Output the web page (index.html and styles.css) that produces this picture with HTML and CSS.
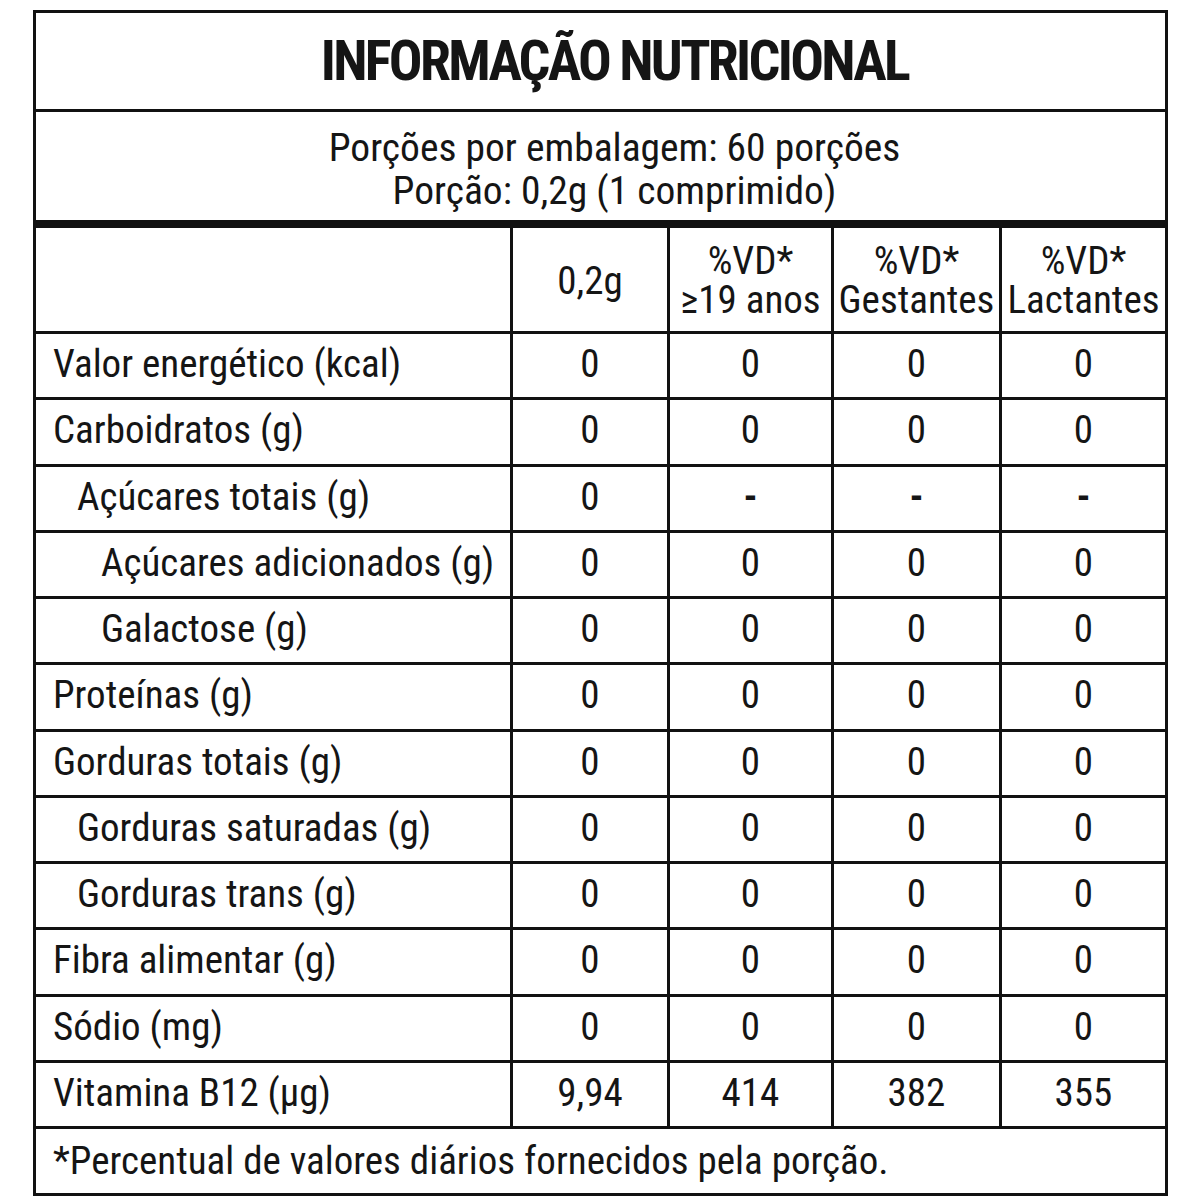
FILE: index.html
```html
<!DOCTYPE html>
<html lang="pt-BR">
<head>
<meta charset="utf-8">
<title>Informação Nutricional</title>
<link rel="stylesheet" href="styles.css">
</head>
<body>
<table class="nutri">
  <colgroup>
    <col class="c-label">
    <col class="c-q">
    <col class="c-vd1">
    <col class="c-vd2">
    <col class="c-vd3">
  </colgroup>
  <tr class="r-title"><td colspan="5" class="title">INFORMAÇÃO NUTRICIONAL</td></tr>
  <tr class="r-serving"><td colspan="5" class="serving">Porções por embalagem: 60 porções<br>Porção: 0,2g (1 comprimido)</td></tr>
  <tr class="r-head">
    <td></td>
    <td class="num">0,2g</td>
    <td class="num">%VD*<br>≥19 anos</td>
    <td class="num">%VD*<br>Gestantes</td>
    <td class="num">%VD*<br>Lactantes</td>
  </tr>
  <tr class="row"><td class="lbl">Valor energético (kcal)</td><td class="num">0</td><td class="num">0</td><td class="num">0</td><td class="num">0</td></tr>
  <tr class="row"><td class="lbl">Carboidratos (g)</td><td class="num">0</td><td class="num">0</td><td class="num">0</td><td class="num">0</td></tr>
  <tr class="row"><td class="lbl ind1">Açúcares totais (g)</td><td class="num">0</td><td class="num dash">-</td><td class="num dash">-</td><td class="num dash">-</td></tr>
  <tr class="row"><td class="lbl ind2">Açúcares adicionados (g)</td><td class="num">0</td><td class="num">0</td><td class="num">0</td><td class="num">0</td></tr>
  <tr class="row"><td class="lbl ind2">Galactose (g)</td><td class="num">0</td><td class="num">0</td><td class="num">0</td><td class="num">0</td></tr>
  <tr class="row"><td class="lbl">Proteínas (g)</td><td class="num">0</td><td class="num">0</td><td class="num">0</td><td class="num">0</td></tr>
  <tr class="row"><td class="lbl">Gorduras totais (g)</td><td class="num">0</td><td class="num">0</td><td class="num">0</td><td class="num">0</td></tr>
  <tr class="row"><td class="lbl ind1">Gorduras saturadas (g)</td><td class="num">0</td><td class="num">0</td><td class="num">0</td><td class="num">0</td></tr>
  <tr class="row"><td class="lbl ind1">Gorduras trans (g)</td><td class="num">0</td><td class="num">0</td><td class="num">0</td><td class="num">0</td></tr>
  <tr class="row"><td class="lbl">Fibra alimentar (g)</td><td class="num">0</td><td class="num">0</td><td class="num">0</td><td class="num">0</td></tr>
  <tr class="row"><td class="lbl">Sódio (mg)</td><td class="num">0</td><td class="num">0</td><td class="num">0</td><td class="num">0</td></tr>
  <tr class="row"><td class="lbl">Vitamina B12 (µg)</td><td class="num">9,94</td><td class="num">414</td><td class="num">382</td><td class="num">355</td></tr>
  <tr class="r-foot"><td colspan="5" class="foot">*Percentual de valores diários fornecidos pela porção.</td></tr>
</table>
</body>
</html>
```

FILE: styles.css
```css
html, body {
  margin: 0;
  padding: 0;
  background: #fff;
}
body {
  padding: 10px 0 0 33px;
  font-family: "Roboto Condensed", "Liberation Sans", sans-serif;
  color: #151515;
}
.nutri {
  border-collapse: collapse;
  table-layout: fixed;
  width: 1134px;
  border: 3px solid #111;
}
.nutri td {
  border: 3px solid #111;
  padding: 0;
  vertical-align: middle;
  font-size: 39px;
  line-height: 40px;
}
.c-label { width: 477px; }
.c-q { width: 157px; }
.c-vd1 { width: 164px; }
.c-vd2 { width: 168px; }
.c-vd3 { width: 166px; }

.r-title td { height: 96px; }
.nutri .title {
  text-align: center;
  font-weight: bold;
  font-size: 56px;
  line-height: 60px;
  letter-spacing: -2.7px;
  padding-left: 28px;
}
.r-serving td {
  height: 102px;
  border-bottom: 8px solid #111;
}
.nutri .serving {
  text-align: center;
  font-size: 39.5px;
  line-height: 43px;
  padding-left: 28px;
  padding-top: 6px;
}
.r-head td {
  height: 100px;
  padding-top: 3px;
}
.nutri .r-head .num {
  line-height: 39px;
  padding-top: 3px;
}
.row td {
  height: 60.25px;
  padding-bottom: 3px;
}
.nutri .num { text-align: center; }
.nutri .dash { font-weight: bold; }
.nutri .lbl {
  padding-left: 17px;
  white-space: nowrap;
}
.nutri .lbl.ind1 { padding-left: 41px; }
.nutri .lbl.ind2 { padding-left: 65px; }
.r-foot td { height: 64px; }
.nutri .foot {
  padding-left: 17px;
}
```
